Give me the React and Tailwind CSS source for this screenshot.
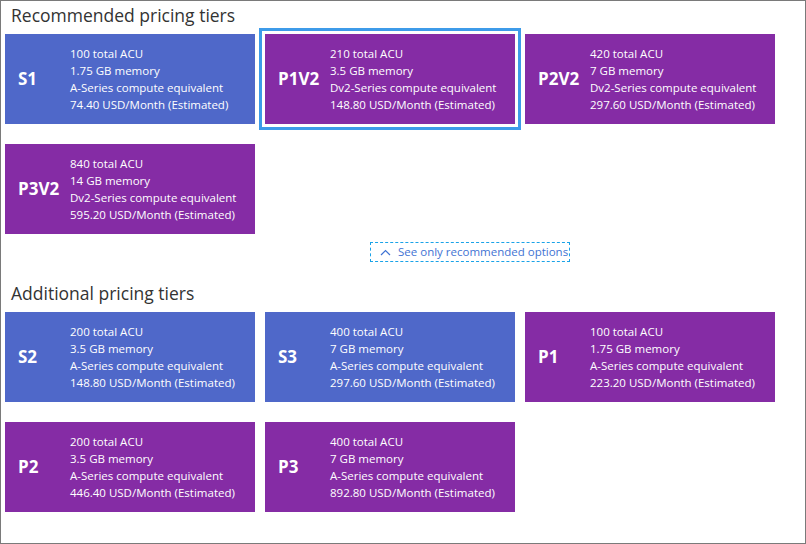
const recommended = [
  { name: 'S1', color: 'blue', acu: '100 total ACU', mem: '1.75 GB memory', series: 'A-Series compute equivalent', price: '74.40 USD/Month (Estimated)' },
  { name: 'P1V2', color: 'purple', selected: true, acu: '210 total ACU', mem: '3.5 GB memory', series: 'Dv2-Series compute equivalent', price: '148.80 USD/Month (Estimated)' },
  { name: 'P2V2', color: 'purple', acu: '420 total ACU', mem: '7 GB memory', series: 'Dv2-Series compute equivalent', price: '297.60 USD/Month (Estimated)' },
  { name: 'P3V2', color: 'purple', acu: '840 total ACU', mem: '14 GB memory', series: 'Dv2-Series compute equivalent', price: '595.20 USD/Month (Estimated)' },
]

const additional = [
  { name: 'S2', color: 'blue', acu: '200 total ACU', mem: '3.5 GB memory', series: 'A-Series compute equivalent', price: '148.80 USD/Month (Estimated)' },
  { name: 'S3', color: 'blue', acu: '400 total ACU', mem: '7 GB memory', series: 'A-Series compute equivalent', price: '297.60 USD/Month (Estimated)' },
  { name: 'P1', color: 'purple', acu: '100 total ACU', mem: '1.75 GB memory', series: 'A-Series compute equivalent', price: '223.20 USD/Month (Estimated)' },
  { name: 'P2', color: 'purple', acu: '200 total ACU', mem: '3.5 GB memory', series: 'A-Series compute equivalent', price: '446.40 USD/Month (Estimated)' },
  { name: 'P3', color: 'purple', acu: '400 total ACU', mem: '7 GB memory', series: 'A-Series compute equivalent', price: '892.80 USD/Month (Estimated)' },
]

function TierCard({ tier }) {
  const bg = tier.color === 'blue' ? 'bg-[#4f68c9]' : 'bg-[#852ca5]'
  return (
    <div
      className={`flex h-[90px] w-[250px] items-center text-white ${bg} ${
        tier.selected ? 'outline-[3px] outline-offset-[3px] outline-[#3d9be9] outline-solid' : ''
      }`}
    >
      <div className="w-[65px] shrink-0 pl-[13px] text-[17px] font-bold">{tier.name}</div>
      <div className="text-[11.5px] leading-[17px]">
        <div>{tier.acu}</div>
        <div>{tier.mem}</div>
        <div>{tier.series}</div>
        <div>{tier.price}</div>
      </div>
    </div>
  )
}

function TierGrid({ tiers }) {
  return (
    <div className="flex w-[780px] flex-wrap gap-x-[10px] gap-y-[20px] pl-[4px]">
      {tiers.map((t) => (
        <TierCard key={t.name} tier={t} />
      ))}
    </div>
  )
}

export default function App() {
  return (
    <div
      className="h-[544px] w-[806px] overflow-hidden border border-[#7a7a7a] bg-white"
      style={{ fontFamily: '"Segoe UI", "Open Sans", "Noto Sans", sans-serif' }}
    >
      <h2 className="pt-[2px] pl-[10px] text-[17.5px] leading-[24px] text-[#333]">Recommended pricing tiers</h2>
      <div className="mt-[7px]">
        <TierGrid tiers={recommended} />
      </div>
      <div className="mt-[8px] pl-[369px]">
        <button className="flex h-[20px] w-[200px] items-center gap-[7px] border border-dashed border-[#1aa3e8] pl-[9px] text-[11.5px] text-[#3f73d3]">
          <svg className="shrink-0" width="11" height="7" viewBox="0 0 11 7" fill="none" stroke="#3f73d3" strokeWidth="1.2">
            <path d="M1 6 L5.5 1.5 L10 6" />
          </svg>
          <span className="whitespace-nowrap">See only recommended options</span>
        </button>
      </div>
      <h2 className="mt-[19px] pl-[10px] text-[17.5px] leading-[24px] text-[#333]">Additional pricing tiers</h2>
      <div className="mt-[7px]">
        <TierGrid tiers={additional} />
      </div>
    </div>
  )
}
